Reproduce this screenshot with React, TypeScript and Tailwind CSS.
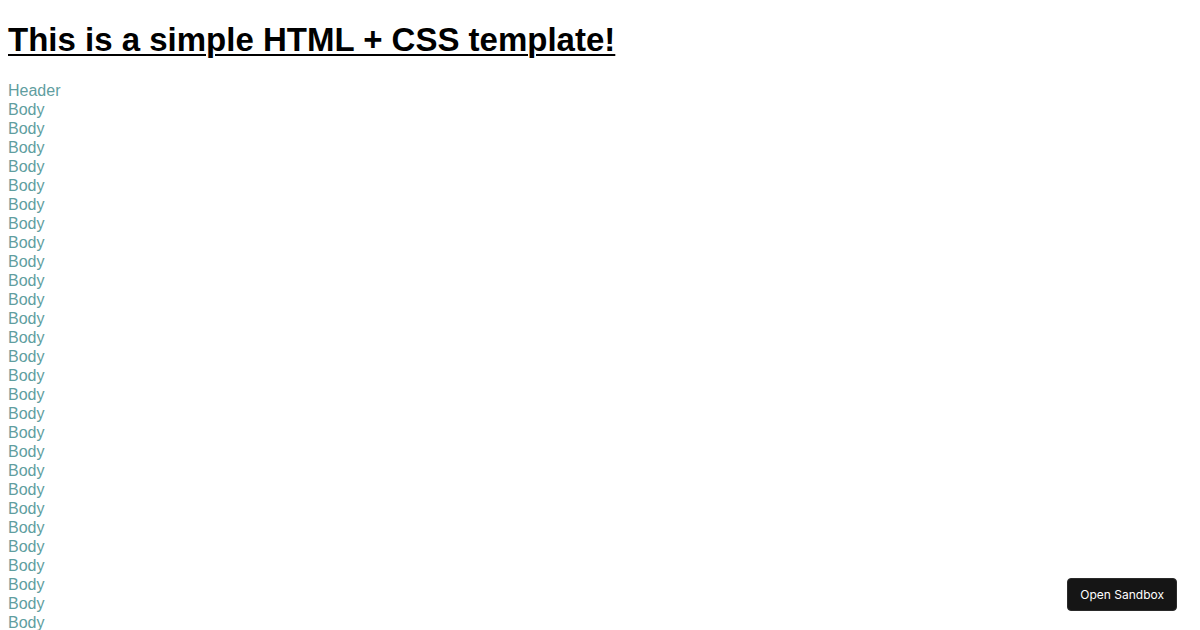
const rows = Array.from({ length: 30 }, (_, i) => i)

function App() {
  return (
    <div className="h-[630px] overflow-hidden bg-white p-2 font-['Liberation_Sans',Arial,sans-serif]">
      <h1 className="my-[13px] text-[33px] leading-[37px] font-bold text-black underline decoration-2 underline-offset-[3px]">
        This is a simple HTML + CSS template!
      </h1>
      <div className="mt-[23px] text-base leading-[19px] text-[#5f9ea0]">
        <div>Header</div>
        {rows.map((i) => (
          <div key={i}>Body</div>
        ))}
      </div>

      <button className="fixed right-[23px] bottom-[19px] h-[33px] rounded-[4px] bg-[#151515] px-[12px] text-[12px] text-white font-['Inter',sans-serif] border border-[#2a2a2a]">
        Open Sandbox
      </button>
    </div>
  )
}

export default App
